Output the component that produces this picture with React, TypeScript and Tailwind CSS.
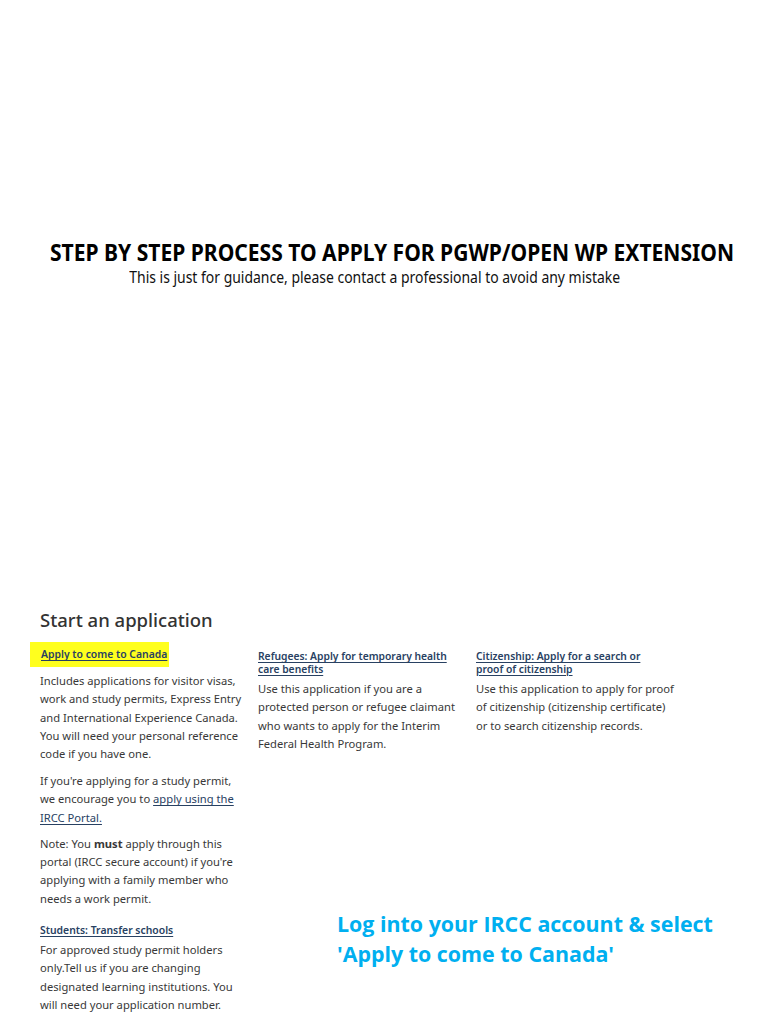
import React from "react";

const linkClass = "font-semibold text-[#284162] underline underline-offset-2";

function Column({ children, width = "w-[207px]" }: { children: React.ReactNode; width?: string }) {
  return <div className={width + " shrink-0"}>{children}</div>;
}

export default function App() {
  return (
    <div className="relative h-[1024px] w-[768px] overflow-hidden bg-white">
      <header
        className="flex flex-col items-center pt-[236px]"
        style={{ fontFamily: "'Noto Sans', 'Open Sans', sans-serif" }}
      >
        <h1 className="ml-[15px] origin-center scale-x-[0.877] whitespace-nowrap text-[24px] font-bold leading-[32px] text-black">
          STEP BY STEP PROCESS TO APPLY FOR PGWP/OPEN WP EXTENSION
        </h1>
        <p className="-ml-[19px] -mt-[2px] origin-center scale-x-[0.9] whitespace-nowrap text-[15.5px] leading-[22px] text-[#111]">
          This is just for guidance, please contact a professional to avoid any mistake
        </p>
      </header>

      <section
        className="ml-[40px] mt-[319px] text-[#383838]"
        style={{ fontFamily: "'Noto Sans', 'Open Sans', sans-serif" }}
      >
        <h2 className="text-[18.5px] font-medium leading-[26px] text-[#333]">Start an application</h2>

        <div className="mt-[9px] flex gap-[11px] text-[11.2px] leading-[18.3px]">
          <Column>
            <div className="-ml-[10px] mb-[5px] inline-flex h-[25px] items-center bg-[#ffff1e] pl-[11px] pr-[2px]">
              <a className={linkClass + " text-[10.4px] leading-[13px] text-[#1a1a1a]"}>Apply to come to Canada</a>
            </div>
            <p>
              Includes applications for visitor visas, work and study permits, Express Entry and International
              Experience Canada. You will need your personal reference code if you have one.
            </p>
            <p className="mt-[8.5px]">
              If you're applying for a study permit, we encourage you to{" "}
              <a className="text-[#284162] underline underline-offset-2">apply using the IRCC Portal.</a>
            </p>
            <p className="mt-[8px]">
              Note: You <strong className="font-bold">must</strong> apply through this portal (IRCC secure account) if
              you're applying with a family member who needs a work permit.
            </p>
            <a className={linkClass + " mt-[16px] block text-[10.4px] leading-[13px]"}>Students: Transfer schools</a>
            <p className="mt-[4px]">
              For approved study permit holders only.Tell us if you are changing designated learning institutions. You
              will need your application number.
            </p>
          </Column>

          <Column>
            <a className={linkClass + " mt-[8px] block text-[10.3px] leading-[12.5px]"}>
              Refugees: Apply for temporary health care benefits
            </a>
            <p className="mt-[5px]">
              Use this application if you are a protected person or refugee claimant who wants to apply for the
              Interim Federal Health Program.
            </p>
          </Column>

          <Column width="w-[200px]">
            <a className={linkClass + " mt-[8px] block pr-[10px] text-[10.3px] leading-[12.5px]"}>
              Citizenship: Apply for a search or proof of citizenship
            </a>
            <p className="mt-[5px]">
              Use this application to apply for proof of citizenship (citizenship certificate) or to search
              citizenship records.
            </p>
          </Column>
        </div>
      </section>

      <p
        className="absolute left-[337px] top-[909px] text-[21.4px] font-bold leading-[30px] text-[#00aff0]"
        style={{ fontFamily: "'Open Sans', 'Noto Sans', sans-serif" }}
      >
        Log into your IRCC account &amp; select
        <br />
        'Apply to come to Canada'
      </p>
    </div>
  );
}
